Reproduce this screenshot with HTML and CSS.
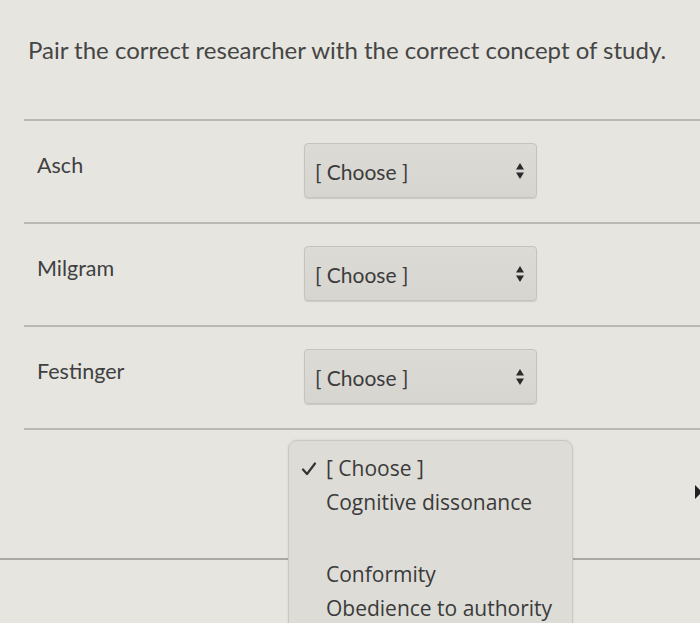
FILE: index.html
```html
<!DOCTYPE html>
<html lang="en">
<head>
<meta charset="utf-8">
<title>Matching question</title>
<link rel="stylesheet" href="styles.css">
</head>
<body>
<div class="page">
  <h1 class="question">Pair the correct researcher with the correct concept of study.</h1>
  <div class="rows">
    <div class="row">
      <span class="label">Asch</span>
      <div class="select"><span class="value">[ Choose ]</span>
        <svg class="arrows" width="10" height="18" viewBox="0 0 10 18"><path d="M1 7.5 L5 1 L9 7.5 Z M1 10.5 L5 17 L9 10.5 Z" fill="#2b2b2b"/></svg>
      </div>
    </div>
    <div class="row">
      <span class="label">Milgram</span>
      <div class="select"><span class="value">[ Choose ]</span>
        <svg class="arrows" width="10" height="18" viewBox="0 0 10 18"><path d="M1 7.5 L5 1 L9 7.5 Z M1 10.5 L5 17 L9 10.5 Z" fill="#2b2b2b"/></svg>
      </div>
    </div>
    <div class="row">
      <span class="label">Festinger</span>
      <div class="select"><span class="value">[ Choose ]</span>
        <svg class="arrows" width="10" height="18" viewBox="0 0 10 18"><path d="M1 7.5 L5 1 L9 7.5 Z M1 10.5 L5 17 L9 10.5 Z" fill="#2b2b2b"/></svg>
      </div>
    </div>
    <div class="row-end"></div>
  </div>
  <div class="footer-rule"></div>

  <ul class="menu">
    <li class="opt checked"><svg class="check" width="16" height="14" viewBox="0 0 16 14"><path d="M2 7.5 L6 12 L14 1.5" fill="none" stroke="#333" stroke-width="2.2" stroke-linecap="round" stroke-linejoin="round"/></svg>[ Choose ]</li>
    <li class="opt">Cognitive dissonance</li>
    <li class="opt spacer"></li>
    <li class="opt">Conformity</li>
    <li class="opt">Obedience to authority</li>
  </ul>
  <div class="edge-arrow"></div>
</div>
</body>
</html>
```

FILE: styles.css
```css
html, body {
  margin: 0;
  padding: 0;
}
body {
  background: #e6e5e0;
  width: 700px;
  height: 623px;
  overflow: hidden;
  font-family: Lato, "Open Sans", sans-serif;
  color: #3e3e3e;
}
.page {
  position: relative;
  height: 623px;
}
.question {
  margin: 0;
  padding: 35px 0 0 28px;
  font-size: 24px;
  font-weight: 400;
  line-height: 29px;
  color: #454545;
}
.rows {
  margin: 55px 0 0 24px;
}
.row {
  border-top: 2px solid #b9b8b3;
  height: 101px;
  display: flex;
  align-items: flex-start;
}
.label {
  width: 267px;
  padding: 32px 0 0 13px;
  font-size: 21.5px;
  line-height: 25px;
  color: #404040;
}
.select {
  margin-top: 22px;
  width: 233px;
  height: 55px;
  border: 1px solid #c4c3be;
  border-radius: 4px;
  background: linear-gradient(180deg, #dcdbd6 0%, #d6d5d0 100%);
  box-shadow: 0 1px 1px rgba(0,0,0,0.12);
  display: flex;
  align-items: center;
  justify-content: space-between;
  padding: 0 11px 0 10px;
  box-sizing: border-box;
}
.value {
  font-size: 21px;
  color: #3c3c3c;
  padding-top: 2px;
}
.arrows {
  display: block;
}
.row-end {
  border-top: 2px solid #b9b8b3;
}
.footer-rule {
  margin-top: 128px;
  border-top: 2px solid #a9a8a3;
}
.menu {
  position: absolute;
  left: 288px;
  top: 440px;
  width: 285px;
  height: 200px;
  margin: 0;
  padding: 10px 0 0 0;
  list-style: none;
  background: #dddcd7;
  border: 1px solid #c9c8c3;
  border-radius: 9px;
  box-sizing: border-box;
  box-shadow: 0 0 3px rgba(0,0,0,0.08);
  font-family: "Open Sans", Roboto, sans-serif;
}
.opt {
  font-size: 21px;
  line-height: 34px;
  padding-left: 37px;
  color: #3a3a3a;
  position: relative;
}
.opt.spacer {
  height: 38px;
}
.check {
  position: absolute;
  left: 12px;
  top: 11px;
}
.edge-arrow {
  position: absolute;
  left: 695px;
  top: 485px;
  width: 0;
  height: 0;
  border-top: 7px solid transparent;
  border-bottom: 7px solid transparent;
  border-left: 7px solid #222;
}
```
